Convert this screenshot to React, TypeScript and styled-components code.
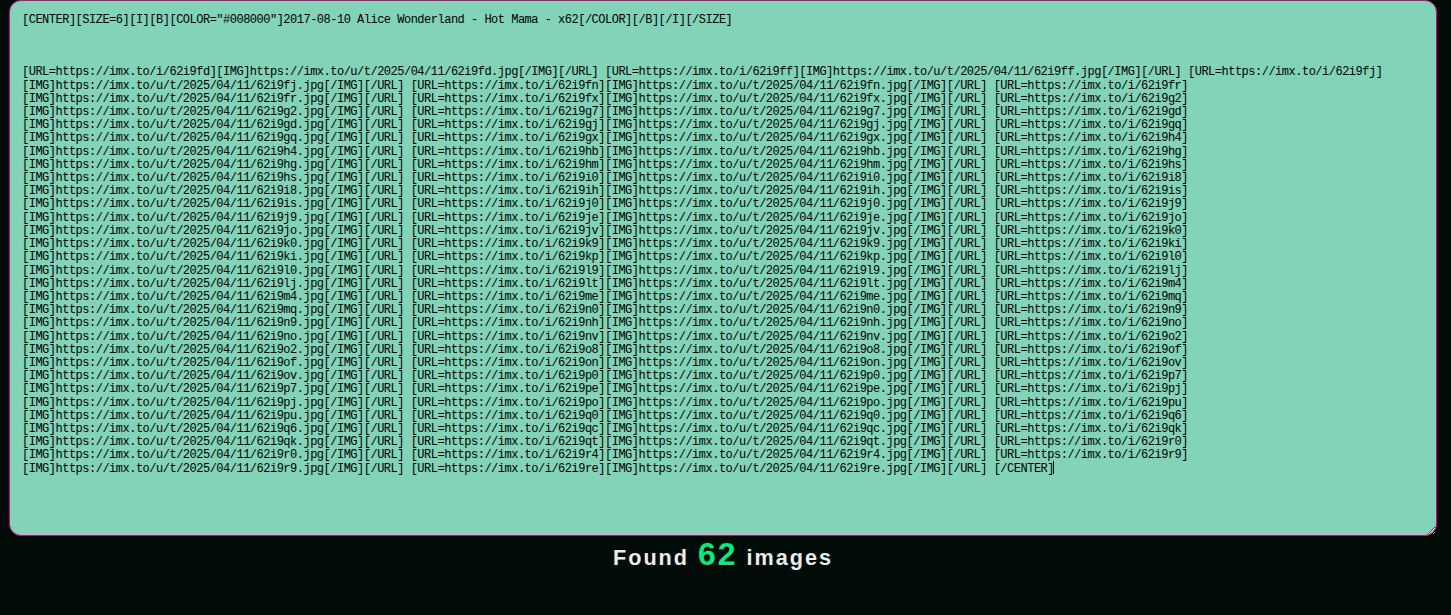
import React from "react";
import styled, { createGlobalStyle } from "styled-components";

const GlobalStyle = createGlobalStyle`
  html, body { margin: 0; padding: 0; background: #010c09; }
`;

const Page = styled.main`
  display: flex;
  flex-direction: column;
  width: 1451px;
  height: 615px;
  overflow: hidden;
  background: #010c09;
`;

const EditorFrame = styled.div`
  position: relative;
  flex: none;
  width: 1428px;
  height: 536px;
  margin-left: 9px;
`;

const Editor = styled.textarea`
  display: block;
  box-sizing: border-box;
  width: 100%;
  height: 100%;
  margin: 0;
  padding: 12.65px 12px;
  border: 1px solid #d8007e;
  border-radius: 12px;
  outline: none;
  background: #82d3b8;
  color: #000000;
  caret-color: transparent;
  font-family: "Liberation Mono", monospace;
  font-size: 12px;
  line-height: 13.2px;
  letter-spacing: -0.5px;
  resize: both;
`;

const Caret = styled.span`
  position: absolute;
  left: 1044px;
  top: 461px;
  width: 1px;
  height: 13px;
  background: #000000;
  pointer-events: none;
`;

const Summary = styled.p`
  width: 1428px;
  margin: 0 0 0 9px;
  text-align: center;
  color: #ececec;
  font-family: "Liberation Sans", Arial, sans-serif;
  font-weight: 700;
  font-size: 21.6px;
  line-height: 37px;
  letter-spacing: 2px;
`;

const Count = styled.span`
  color: #0ce87e;
  font-size: 32px;
  margin: 0 1px;
`;

const ids = "fd ff fj fn fr fx g2 g7 gd gj gq gx h4 hb hg hm hs i0 i8 ih is j0 j9 je jo jv k0 k9 ki kp l0 l9 lj lt m4 me mq n0 n9 nh no nv o2 o8 of on ov p0 p7 pe pj po pu q0 q6 qc qk qt r0 r4 r9 re".split(" ");

const body = ids
  .map((id) => `[URL=https://imx.to/i/62i9${id}][IMG]https://imx.to/u/t/2025/04/11/62i9${id}.jpg[/IMG][/URL]`)
  .join(" ");

const bbcode = `[CENTER][SIZE=6][I][B][COLOR="#008000"]2017-08-10 Alice Wonderland - Hot Mama - x62[/COLOR][/B][/I][/SIZE]\n\n\n\n${body} [/CENTER]`;

export default function App() {
  return (
    <Page>
      <GlobalStyle />
      <EditorFrame>
        <Editor spellCheck={false} defaultValue={bbcode} />
        <Caret />
      </EditorFrame>
      <Summary>
        Found <Count>{ids.length}</Count> images
      </Summary>
    </Page>
  );
}
